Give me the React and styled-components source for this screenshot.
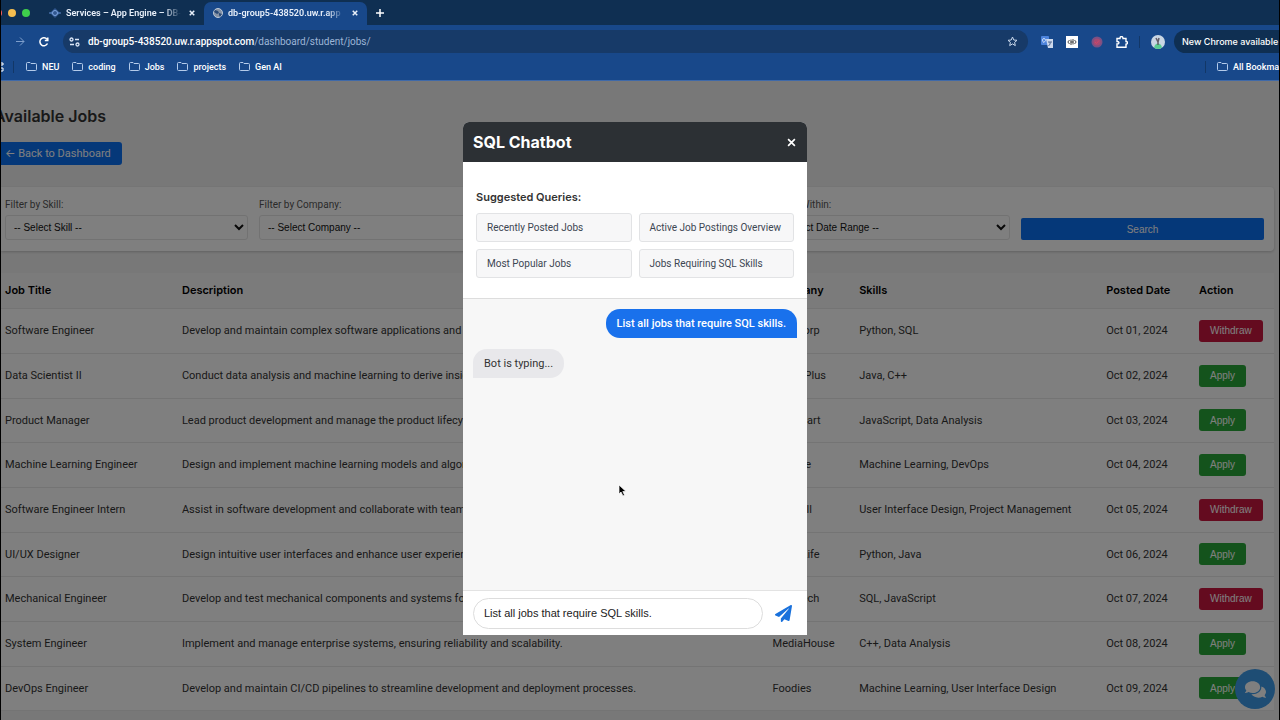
import React from "react";
import styled, { createGlobalStyle } from "styled-components";
import { FaPaperPlane, FaComments } from "react-icons/fa";

const GlobalStyle = createGlobalStyle`
  * { box-sizing: border-box; }
  html, body, #root { height: 100%; }
  body { margin: 0; overflow: hidden; background: #000; font-family: Roboto, "Liberation Sans", sans-serif; }
  button, input, select { font-family: "Liberation Sans", Arial, sans-serif; }
`;

const Window = styled.div`
  display: flex;
  flex-direction: column;
  height: 100vh;
  margin: 0 1px;
  overflow: hidden;
`;

/* Browser chrome */
const Chrome = styled.header`
  flex: none;
  background: #18488a;
  color: #fff;
  border-bottom: 1px solid #3f69a8;
  font-size: 9px;
  font-weight: 500;
`;
const TabStrip = styled.div`
  display: flex;
  align-items: flex-end;
  height: 25px;
  background: #0f2f52;
`;
const Lights = styled.div`
  display: flex;
  align-items: center;
  gap: 6px;
  width: 46px;
  height: 25px;
  margin-left: -7px;
`;
const Light = styled.span`
  width: 8px;
  height: 8px;
  border-radius: 50%;
  background: ${(p) => p.$color};
`;
const Tab = styled.div`
  display: flex;
  align-items: center;
  gap: 5px;
  width: ${(p) => p.$width}px;
  height: 23px;
  padding: 0 6px 2px 9px;
  border-radius: 7px 7px 0 0;
  background: ${(p) => (p.$active ? "#18488a" : "transparent")};
  color: #e9f0fa;
  svg { flex: none; }
`;
const TabTitle = styled.span`
  flex: 1;
  overflow: hidden;
  white-space: nowrap;
  font-weight: 600;
  mask-image: linear-gradient(90deg, #000 85%, transparent);
`;
const IconButton = styled.button`
  display: grid;
  place-items: center;
  flex: none;
  width: ${(p) => p.$size || 12}px;
  height: ${(p) => p.$size || 12}px;
  padding: 0;
  border: 0;
  background: none;
  color: inherit;
`;
const Toolbar = styled.div`
  display: flex;
  align-items: center;
  height: 33px;
  padding-left: 13px;
`;
const Address = styled.div`
  display: flex;
  align-items: center;
  flex: 1;
  gap: 8px;
  height: 23px;
  margin-left: 1px;
  padding: 0 10px 0 6px;
  border-radius: 12px;
  background: #173a68;
`;
const Url = styled.span`
  flex: 1;
  font-size: 10px;
  color: #fff;
`;
const Path = styled.span`
  font-weight: 400;
  color: #9db5d6;
`;
const Extensions = styled.div`
  display: flex;
  align-items: center;
  gap: 13px;
  padding: 0 9px 0 13px;
`;
const Divider = styled.span`
  flex: none;
  width: 1px;
  height: 12px;
  margin: ${(p) => p.$margin || "0"};
  background: #123767;
`;
const UpdateButton = styled.button`
  width: 105px;
  height: 23px;
  padding: 0 0 0 8px;
  border: 0;
  border-radius: 12px 0 0 12px;
  background: #0f2f52;
  color: #fff;
  text-align: left;
  white-space: nowrap;
  font: 500 9px Inter, sans-serif;
`;
const Bookmarks = styled.nav`
  display: flex;
  align-items: center;
  height: 22px;
  padding-bottom: 5px;
`;
const Bookmark = styled.a`
  display: flex;
  align-items: center;
  gap: 5px;
  margin-right: 13px;
  color: #fff;
  text-decoration: none;
  white-space: nowrap;
`;
const AllBookmarks = styled.div`
  display: flex;
  align-items: center;
  gap: 11px;
  width: 74px;
  margin-left: auto;
  overflow: hidden;
`;

/* Page */
const Page = styled.main`
  position: relative;
  flex: 1;
  min-height: 0;
  overflow: hidden;
  background: #f1f1f1;
`;
const Title = styled.h1`
  margin: 24px 0 15px -7px;
  font-family: Inter, sans-serif;
  font-size: 16px;
  line-height: 22px;
  font-weight: 600;
  color: #333;
`;
const BackLink = styled.a`
  display: inline-block;
  padding: 0 11px 0 4px;
  border-radius: 0 3px 3px 0;
  background: #0b70f2;
  color: #fff;
  font-size: 11px;
  line-height: 23px;
  text-decoration: none;
`;
const Arrow = styled.span`
  font-family: Inter, sans-serif;
`;
const Filters = styled.form`
  display: grid;
  grid-template-columns: repeat(5, 1fr);
  column-gap: 11px;
  align-items: end;
  height: 64px;
  margin: 22px 5px 22px 0;
  padding: 0 10px 11px 4px;
  border-radius: 0 4px 4px 0;
  background: #fff;
  box-shadow: 0 1px 3px rgba(0, 0, 0, 0.2);
`;
const Field = styled.label`
  display: flex;
  flex-direction: column;
  gap: 4px;
  color: #555;
  font-size: 10px;
  line-height: 12px;
`;
const Select = styled.select`
  width: 100%;
  height: 25px;
  padding: 0 4px;
  border: 1px solid #e4e4e4;
  border-radius: 3px;
  background: #fff;
  color: #111;
  font-size: 10px;
`;
const SearchButton = styled.button`
  height: 22px;
  border: 0;
  border-radius: 2px;
  background: #0b70f2;
  color: #fff;
  font-size: 10px;
`;
const Table = styled.table`
  width: calc(100% - 5px);
  table-layout: fixed;
  border-collapse: collapse;
  background: #fff;
  font-size: 11px;
  color: #333;
  th, td {
    padding: 0 0 0 4px;
    border-bottom: 1px solid #e8e8e8;
    text-align: left;
    white-space: nowrap;
  }
  th {
    height: 35px;
    background: #f6f6f6;
    color: #000;
    font-family: Inter, sans-serif;
    font-weight: 600;
  }
`;
const Col = styled.col`
  width: ${(p) => p.$width};
`;
const Row = styled.tr`
  height: ${(p) => (p.$tall ? 45 : 44)}px;
`;
const Action = styled.button`
  height: 22px;
  padding: 0 11px;
  border: 0;
  border-radius: 3px;
  background: ${(p) => (p.$withdraw ? "#c9173f" : "#28a738")};
  color: #fff;
  font-size: 10px;
`;
const Fab = styled.button`
  position: absolute;
  right: 4px;
  bottom: 11px;
  display: grid;
  place-items: center;
  width: 40px;
  height: 40px;
  padding: 0;
  border: 0;
  border-radius: 50%;
  background: #3c9ae8;
  color: #fff;
`;
const Overlay = styled.div`
  position: absolute;
  inset: 0;
  display: flex;
  justify-content: center;
  align-items: flex-start;
  padding: 41px 10px 0 0;
  background: rgba(0, 0, 0, 0.5);
`;

/* Chat dialog */
const Dialog = styled.section`
  display: flex;
  flex-direction: column;
  width: 344px;
  height: 513px;
  overflow: hidden;
  border-radius: 6px 6px 0 0;
  background: #fff;
`;
const DialogHeader = styled.header`
  display: flex;
  align-items: center;
  justify-content: space-between;
  height: 40px;
  padding: 0 10px;
  background: #2c3034;
  color: #fff;
  h2 { margin: 0; font-family: Inter, sans-serif; font-size: 16px; font-weight: 700; }
`;
const Suggestions = styled.div`
  height: 137px;
  padding: 28px 13px 0;
  border-bottom: 1px solid #ddd;
  h3 { margin: 0 0 8px; font-family: Inter, sans-serif; font-size: 11px; line-height: 15px; font-weight: 600; color: #333; }
`;
const QueryGrid = styled.div`
  display: grid;
  grid-template-columns: 1fr 1fr;
  gap: 7px;
`;
const Query = styled.button`
  height: 29px;
  padding: 0 10px;
  border: 1px solid #e2e3e5;
  border-radius: 3px;
  background: #f7f7f8;
  color: #3c4652;
  font-family: Roboto, sans-serif;
  font-size: 10px;
  text-align: left;
`;
const Messages = styled.div`
  display: flex;
  flex: 1;
  flex-direction: column;
  gap: 11px;
  padding: 10px;
  background: #f7f7f7;
`;
const Bubble = styled.p`
  align-self: ${(p) => (p.$user ? "flex-end" : "flex-start")};
  margin: 0;
  padding: 0 11px;
  border-radius: ${(p) => (p.$user ? "14px 14px 0 14px" : "14px 14px 14px 0")};
  background: ${(p) => (p.$user ? "#1971ec" : "#e8e8eb")};
  color: ${(p) => (p.$user ? "#fff" : "#333")};
  font-size: 11px;
  font-weight: ${(p) => (p.$user ? 500 : 400)};
  line-height: 29px;
`;
const Composer = styled.form`
  display: flex;
  align-items: center;
  gap: 12px;
  height: 45px;
  padding: 0 15px 0 10px;
  border-top: 1px solid #e3e3e3;
`;
const MessageInput = styled.input`
  flex: 1;
  min-width: 0;
  height: 31px;
  padding: 0 10px;
  border: 1px solid #ddd;
  border-radius: 16px;
  color: #222;
  font-size: 11px;
`;
const Pointer = styled.svg`
  position: absolute;
  left: 617px;
  top: 403px;
`;

const Cross = ({ size = 7, width = 2 }) => (
  <svg width={size} height={size} viewBox="0 0 8 8" fill="none" stroke="currentColor" strokeWidth={width}>
    <path d="M1 1l6 6M7 1L1 7" />
  </svg>
);
const Folder = () => (
  <svg width="11" height="9" viewBox="0 0 11 9" fill="none" stroke="#b4cbea">
    <path d="M.5 7.5v-6q0-1 1-1H4l1 1h4.500q1 0 1 1v5q0 1-1 1h-8q-1 0-1-1z" />
  </svg>
);

const columns = ["13.9%", "46.4%", "6.8%", "19.4%", "7.3%", "auto"];
const jobs = [
  ["Software Engineer", "Develop and maintain complex software applications and systems.", "TechCorp", "Python, SQL", "Oct 01, 2024", true],
  ["Data Scientist II", "Conduct data analysis and machine learning to derive insights.", "HealthPlus", "Java, C++", "Oct 02, 2024"],
  ["Product Manager", "Lead product development and manage the product lifecycle.", "EcoSmart", "JavaScript, Data Analysis", "Oct 03, 2024"],
  ["Machine Learning Engineer", "Design and implement machine learning models and algorithms.", "Finance", "Machine Learning, DevOps", "Oct 04, 2024"],
  ["Software Engineer Intern", "Assist in software development and collaborate with teams.", "EduWell", "User Interface Design, Project Management", "Oct 05, 2024", true],
  ["UI/UX Designer", "Design intuitive user interfaces and enhance user experience.", "GreenLife", "Python, Java", "Oct 06, 2024"],
  ["Mechanical Engineer", "Develop and test mechanical components and systems for use.", "AutoTech", "SQL, JavaScript", "Oct 07, 2024", true],
  ["System Engineer", "Implement and manage enterprise systems, ensuring reliability and scalability.", "MediaHouse", "C++, Data Analysis", "Oct 08, 2024"],
  ["DevOps Engineer", "Develop and maintain CI/CD pipelines to streamline development and deployment processes.", "Foodies", "Machine Learning, User Interface Design", "Oct 09, 2024"],
];
const suggestions = ["Recently Posted Jobs", "Active Job Postings Overview", "Most Popular Jobs", "Jobs Requiring SQL Skills"];
const folders = ["NEU", "coding", "Jobs", "projects", "Gen AI"];

function BrowserChrome() {
  return (
    <Chrome>
      <TabStrip>
        <Lights>
          <Light $color="#ff5f57" />
          <Light $color="#f5bd4f" />
          <Light $color="#3fcf4c" />
        </Lights>
        <Tab $width={164}>
          <svg width="12" height="12" viewBox="0 0 12 12">
            <path d="M6 1l5 5-5 5-5-5z" fill="#31568e" />
            <circle cx="6" cy="6" r="2.500" fill="none" stroke="#7fa5df" />
            <path d="M0 6h3M9 6h3" stroke="#5f8acb" />
          </svg>
          <TabTitle>Services – App Engine – DB-</TabTitle>
          <IconButton aria-label="Close tab"><Cross size={6} /></IconButton>
        </Tab>
        <Tab $width={163} $active>
          <svg width="10" height="10" viewBox="0 0 10 10">
            <circle cx="5" cy="5" r="4.500" fill="#8592a5" stroke="#bdc9d8" />
            <path d="M2 2l3 1 1 2-2 1-3-2zM6 5l3 1-2 3-1-2z" fill="#2a4a76" />
          </svg>
          <TabTitle>db-group5-438520.uw.r.app</TabTitle>
          <IconButton aria-label="Close tab"><Cross size={6} /></IconButton>
        </Tab>
        <IconButton $size={25} aria-label="New tab">
          <svg width="8" height="8" viewBox="0 0 8 8" stroke="currentColor" strokeWidth="1.500"><path d="M4 0v8M0 4h8" /></svg>
        </IconButton>
      </TabStrip>
      <Toolbar>
        <IconButton aria-label="Forward">
          <svg width="10" height="9" viewBox="0 0 10 9" fill="none" stroke="#7e9ecb"><path d="M1 4.500h8M5 .5l4 4-4 4" /></svg>
        </IconButton>
        <IconButton $size={36} aria-label="Reload">
          <svg width="10" height="10" viewBox="0 0 10 10" fill="none" stroke="currentColor" strokeWidth="1.500"><path d="M8.500 6.500A4 4 0 1 1 8 2.200M8.800.5v3H5.800" /></svg>
        </IconButton>
        <Address>
          <svg width="11" height="10" viewBox="0 0 11 10" fill="none" stroke="#dce7f7" strokeWidth="1.300">
            <circle cx="2.500" cy="2.500" r="1.500" /><path d="M6 2.500h4M1 7.500h4" /><circle cx="8.500" cy="7.500" r="1.500" />
          </svg>
          <Url>db-group5-438520.uw.r.appspot.com<Path>/dashboard/student/jobs/</Path></Url>
          <svg width="11" height="11" viewBox="0 0 11 11" fill="none" stroke="#cbd9ec"><path d="M5.500 1l1.300 3 3.200.3-2.400 2.100.7 3.200-2.800-1.700-2.800 1.700.7-3.200L1 4.300 4.200 4z" /></svg>
        </Address>
        <Extensions>
          <svg width="12" height="12" viewBox="0 0 12 12"><rect width="8" height="9" rx="1" fill="#4c83dc" /><path d="M5 3h7v9H7z" fill="#ccd8ec" /><path d="M1.500 4q0-1.500 1.500-1.500t1.500 2L3 6.500Q1.500 6 1.500 4" stroke="#c9dcfa" fill="none" /><path d="M7 6h4M9 6q1 2-1.500 4" stroke="#4e6690" fill="none" /></svg>
          <svg width="12" height="12" viewBox="0 0 12 12"><rect width="12" height="12" fill="#fff" /><path d="M3.500 4L1.800 6l1.700 2M8.500 4l1.700 2-1.700 2M5 9V3.500M7 8.500V3M4.500 6h3" stroke="#333" fill="none" strokeWidth=".9" /></svg>
          <svg width="12" height="12" viewBox="0 0 12 12"><circle cx="6" cy="6" r="5.500" fill="#7b5184" /><circle cx="6" cy="6" r="3.500" fill="#a84a72" /><path d="M4 6l1.500 1.500L8 4.500" stroke="#d0466a" fill="none" /></svg>
          <svg width="12" height="12" viewBox="0 0 12 12" fill="none" stroke="#fff" strokeWidth="1.400"><path d="M1 2.500h3q0-2 1.500-2T7 2.500h3v3q1.500 0 1.500 1.300T10 8.200v3H1V8q2 0 2-1.200T1 5.500z" /></svg>
          <Divider $margin="0 -2px" />
          <svg width="14" height="14" viewBox="0 0 14 14"><circle cx="7" cy="7" r="7" fill="#c9d6e4" /><path d="M3 12.500q1-4 4-4t4 4q-4 3-8 0z" fill="#59cc91" /><path d="M5 3l2 4 1-4M7 6v4" stroke="#625c66" fill="none" strokeWidth="1.500" /></svg>
        </Extensions>
        <UpdateButton>New Chrome available</UpdateButton>
      </Toolbar>
      <Bookmarks aria-label="Bookmarks">
        <IconButton aria-label="Apps">
          <svg width="12" height="10" viewBox="0 0 12 10" fill="none" stroke="#fff"><path d="M0 1h2v2H0M0 6h2v3H0" /></svg>
        </IconButton>
        <Divider $margin="0 12px 0 0" />
        {folders.map((name) => (
          <Bookmark href="#" key={name}><Folder />{name}</Bookmark>
        ))}
        <AllBookmarks>
          <Divider />
          <Bookmark href="#"><Folder />All Bookmarks</Bookmark>
        </AllBookmarks>
      </Bookmarks>
    </Chrome>
  );
}

function Filter({ label, placeholder }) {
  return (
    <Field>
      {label}
      <Select><option>{placeholder}</option></Select>
    </Field>
  );
}

function JobsTable() {
  return (
    <Table>
      <colgroup>
        {columns.map((width, i) => <Col key={i} $width={width} />)}
      </colgroup>
      <thead>
        <tr><th>Job Title</th><th>Description</th><th>Company</th><th>Skills</th><th>Posted Date</th><th>Action</th></tr>
      </thead>
      <tbody>
        {jobs.map(([title, description, company, skills, date, applied], i) => (
          <Row key={title} $tall={i % 3 !== 2}>
            <td>{title}</td><td>{description}</td><td>{company}</td><td>{skills}</td><td>{date}</td>
            <td><Action $withdraw={applied}>{applied ? "Withdraw" : "Apply"}</Action></td>
          </Row>
        ))}
      </tbody>
    </Table>
  );
}

function Chatbot() {
  return (
    <Dialog role="dialog" aria-label="SQL Chatbot">
      <DialogHeader>
        <h2>SQL Chatbot</h2>
        <IconButton aria-label="Close chatbot"><Cross size={9} width={1.5} /></IconButton>
      </DialogHeader>
      <Suggestions>
        <h3>Suggested Queries:</h3>
        <QueryGrid>{suggestions.map((text) => <Query key={text}>{text}</Query>)}</QueryGrid>
      </Suggestions>
      <Messages>
        <Bubble $user>List all jobs that require SQL skills.</Bubble>
        <Bubble>Bot is typing...</Bubble>
      </Messages>
      <Composer>
        <MessageInput aria-label="Message" defaultValue="List all jobs that require SQL skills." />
        <IconButton $size={17} type="button" aria-label="Send"><FaPaperPlane size={17} color="#1971dc" /></IconButton>
      </Composer>
    </Dialog>
  );
}

export default function App() {
  return (
    <Window>
      <GlobalStyle />
      <BrowserChrome />
      <Page>
        <Title>Available Jobs</Title>
        <BackLink href="#"><Arrow>←</Arrow> Back to Dashboard</BackLink>
        <Filters>
          <Filter label="Filter by Skill:" placeholder="-- Select Skill --" />
          <Filter label="Filter by Company:" placeholder="-- Select Company --" />
          <Filter label="Filter by Location:" placeholder="-- Select Location --" />
          <Filter label="Posted Within:" placeholder="-- Select Date Range --" />
          <SearchButton type="button">Search</SearchButton>
        </Filters>
        <JobsTable />
        <Fab aria-label="Open chatbot"><FaComments size={21} /></Fab>
        <Overlay><Chatbot /></Overlay>
        <Pointer width="9" height="13" viewBox="0 0 9 13"><path d="M1 1v9l2-2 2 4 1.500-1-1.700-3.500H8z" fill="#000" stroke="#fff" strokeWidth=".7" /></Pointer>
      </Page>
    </Window>
  );
}
